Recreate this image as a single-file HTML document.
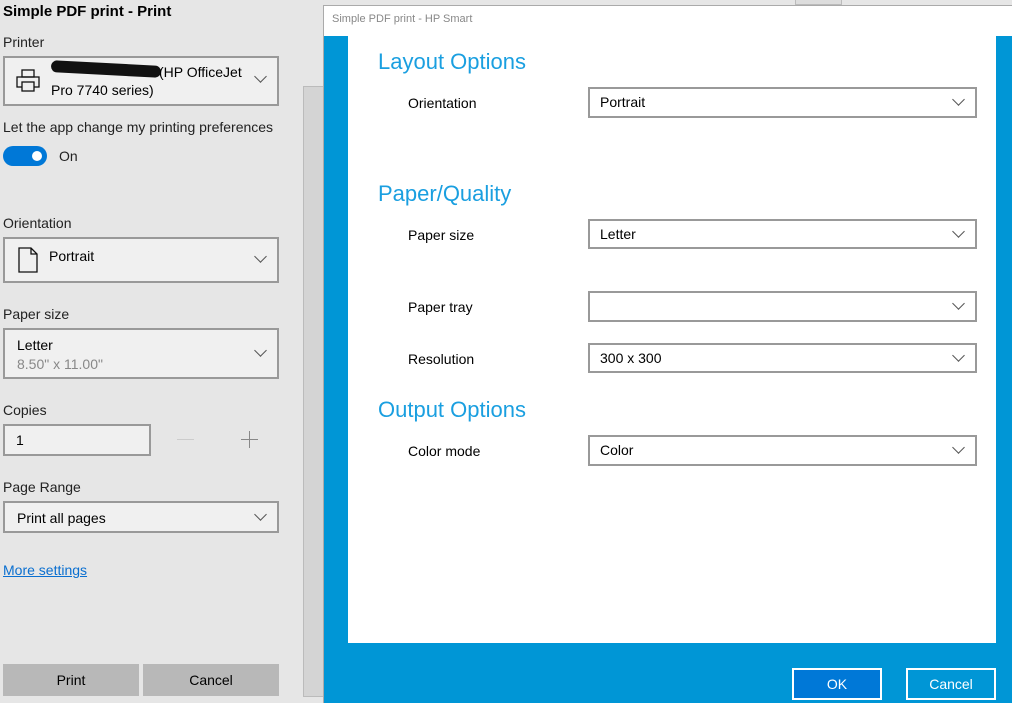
<!DOCTYPE html>
<html><head><style>
*{box-sizing:border-box;margin:0;padding:0}
body{width:1012px;height:703px;overflow:hidden;background:#e6e6e6;font-family:"Liberation Sans",sans-serif;position:relative;color:#000}
.a{position:absolute}
.lbl{font-size:14px;color:#222}
.box{position:absolute;border:2px solid #999;background:#f0f0f0;font-size:14px}
.chev{position:absolute;width:9px;height:9px;border-right:1.3px solid #555;border-bottom:1.3px solid #555;transform:rotate(45deg)}
.hp{position:absolute;left:588px;width:389px;border:2px solid #999;background:#fff;font-size:14px;padding-left:10px;line-height:26px}
.hp .chev{right:12px;top:6px}
.h{position:absolute;left:378px;font-size:22px;color:#1a9fe0}
.hl{position:absolute;left:408px;font-size:14px}
</style></head><body>
<div class="a" style="left:3px;top:3px;font-size:15px;font-weight:bold">Simple PDF print - Print</div>
<div class="a lbl" style="left:3px;top:34px">Printer</div>
<div class="box" style="left:3px;top:56px;width:276px;height:50px">
 <svg class="a" style="left:10px;top:10px" width="26" height="26" viewBox="0 0 26 26" fill="none" stroke="#111" stroke-width="1.3"><rect x="7" y="2" width="12" height="7"/><rect x="2" y="9" width="22" height="10"/><rect x="7" y="14" width="12" height="9" fill="#f0f0f0"/></svg>
 <div class="a" style="left:46px;top:5px;width:110px;height:12px;background:#111;border-radius:6px;transform:rotate(3deg)"></div>
 <div class="a" style="left:46px;top:5px;line-height:18px"><span style="margin-left:108px">(HP OfficeJet</span><br>Pro 7740 series)</div>
 <div class="chev" style="right:12px;top:14px"></div>
</div>
<div class="a lbl" style="left:3px;top:119px">Let the app change my printing preferences</div>
<div class="a" style="left:3px;top:146px;width:44px;height:20px;border-radius:10px;background:#0078d7"><div class="a" style="left:29px;top:5px;width:10px;height:10px;border-radius:5px;background:#fff"></div></div>
<div class="a lbl" style="left:59px;top:148px">On</div>
<div class="a lbl" style="left:3px;top:215px">Orientation</div>
<div class="box" style="left:3px;top:237px;width:276px;height:46px">
 <svg class="a" style="left:12px;top:8px" width="22" height="26" viewBox="0 0 22 26" fill="none" stroke="#111" stroke-width="1.3"><path d="M2 1H14L20 7V25H2Z M14 1V7H20"/></svg>
 <div class="a" style="left:44px;top:9px">Portrait</div>
 <div class="chev" style="right:12px;top:13px"></div>
</div>
<div class="a lbl" style="left:3px;top:306px">Paper size</div>
<div class="box" style="left:3px;top:328px;width:276px;height:51px">
 <div class="a" style="left:12px;top:6px;line-height:19px">Letter<br><span style="color:#888">8.50" x 11.00"</span></div>
 <div class="chev" style="right:12px;top:16px"></div>
</div>
<div class="a lbl" style="left:3px;top:402px">Copies</div>
<div class="box" style="left:3px;top:424px;width:148px;height:32px"><div class="a" style="left:11px;top:6px">1</div></div>
<div class="a" style="left:177px;top:439px;width:17px;height:1px;background:#ccc"></div>
<div class="a" style="left:241px;top:439px;width:17px;height:1px;background:#888"></div>
<div class="a" style="left:249px;top:431px;width:1px;height:17px;background:#888"></div>
<div class="a lbl" style="left:3px;top:479px">Page Range</div>
<div class="box" style="left:3px;top:501px;width:276px;height:32px"><div class="a" style="left:12px;top:7px">Print all pages</div><div class="chev" style="right:12px;top:7px"></div></div>
<div class="a" style="left:3px;top:562px;font-size:14px;color:#0a6fd0;text-decoration:underline">More settings</div>
<div class="a" style="left:3px;top:664px;width:136px;height:32px;background:#b8b8b8;font-size:14px;text-align:center;line-height:32px">Print</div>
<div class="a" style="left:143px;top:664px;width:136px;height:32px;background:#b8b8b8;font-size:14px;text-align:center;line-height:32px">Cancel</div>
<div class="a" style="left:303px;top:86px;width:30px;height:611px;background:#d4d4d4;border:1px solid #bbb"></div>
<div class="a" style="left:795px;top:0;width:47px;height:5px;background:#ddd;border:1px solid #bbb;border-top:none"></div>
<!-- HP dialog -->
<div class="a" style="left:323px;top:5px;width:689px;height:698px;background:#0096d6;border-left:1px solid #aaa"></div>
<div class="a" style="left:323px;top:5px;width:689px;height:31px;background:#fff;border-top:1px solid #aaa;border-left:1px solid #aaa"></div>
<div class="a" style="left:332px;top:13px;font-size:11px;color:#888">Simple PDF print - HP Smart</div>
<div class="a" style="left:348px;top:36px;width:648px;height:607px;background:#fff"></div>
<div class="h" style="top:49px">Layout Options</div>
<div class="hl" style="top:95px">Orientation</div>
<div class="hp" style="top:87px;height:31px">Portrait<div class="chev"></div></div>
<div class="h" style="top:181px">Paper/Quality</div>
<div class="hl" style="top:227px">Paper size</div>
<div class="hp" style="top:219px;height:30px">Letter<div class="chev"></div></div>
<div class="hl" style="top:299px">Paper tray</div>
<div class="hp" style="top:291px;height:31px"><div class="chev"></div></div>
<div class="hl" style="top:351px">Resolution</div>
<div class="hp" style="top:343px;height:30px">300 x 300<div class="chev"></div></div>
<div class="h" style="top:397px">Output Options</div>
<div class="hl" style="top:443px">Color mode</div>
<div class="hp" style="top:435px;height:31px">Color<div class="chev"></div></div>
<div class="a" style="left:792px;top:668px;width:90px;height:32px;background:#0078d7;border:2px solid #fff;color:#fff;font-size:14px;text-align:center;line-height:28px">OK</div>
<div class="a" style="left:906px;top:668px;width:90px;height:32px;border:2px solid #fff;color:#fff;font-size:14px;text-align:center;line-height:28px">Cancel</div>
</body></html>
